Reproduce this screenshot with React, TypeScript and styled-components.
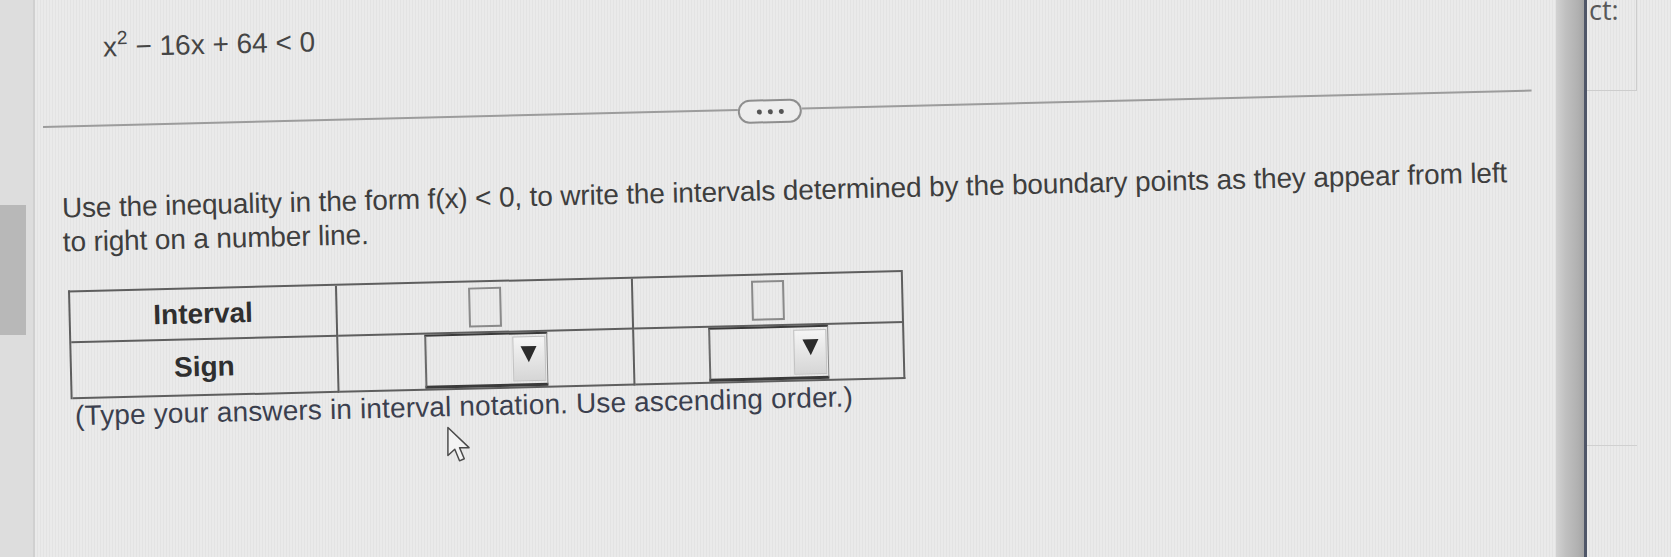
import React from "react";
import styled, { createGlobalStyle } from "styled-components";

const GlobalStyle = createGlobalStyle`
	html, body {
		margin: 0;
		padding: 0;
	}
	body {
		width: 1671px;
		height: 557px;
		overflow: hidden;
		background: #e8e8e8;
		font-family: "Liberation Sans", Arial, sans-serif;
	}
`;

const stripes = `repeating-linear-gradient(90deg, #eaeaea 0px, #eaeaea 2px, #e3e3e3 2px, #e3e3e3 3px)`;

export default function App() {
	return (
		<>
			<GlobalStyle />
			<Page>
				<LeftStrip>
					<SideTab />
				</LeftStrip>

				<Main>
					<Content>
						<Equation>
							x<Sup>2</Sup> − 16x + 64 &lt; 0
						</Equation>

						<Divider>
							<Rule $width={695} />
							<MoreButton>
								<Dot />
								<Dot />
								<Dot />
							</MoreButton>
							<Rule $width={730} />
						</Divider>

						<Prompt>
							Use the inequality in the form f(x) &lt; 0, to write the intervals determined by the
							boundary points as they appear from left to right on a number line.
						</Prompt>

						<Table>
							<Cell $w={267} $h={51}>
								<Label>Interval</Label>
							</Cell>
							<Cell $w={296} $h={51}>
								<AnswerBox />
							</Cell>
							<Cell $w={270} $h={51}>
								<AnswerBox />
							</Cell>

							<Cell $w={267} $h={56}>
								<Label>Sign</Label>
							</Cell>
							<Cell $w={296} $h={56}>
								<Select $w={123}>
									<SelectButton>
										<svg width="18" height="18" viewBox="0 0 18 18">
											<polygon points="1,1 17,1 9,17" fill="#2b2b2b" />
										</svg>
									</SelectButton>
								</Select>
							</Cell>
							<Cell $w={270} $h={56}>
								<Select $w={120}>
									<SelectButton>
										<svg width="18" height="18" viewBox="0 0 18 18">
											<polygon points="1,1 17,1 9,17" fill="#2b2b2b" />
										</svg>
									</SelectButton>
								</Select>
							</Cell>
						</Table>

						<Note>(Type your answers in interval notation. Use ascending order.)</Note>
					</Content>
				</Main>

				<Scrollbar />
				<ScrollEdge />

				<RightPanel>
					<HelpBox>
						<HelpText>ct:</HelpText>
					</HelpBox>
					<HelpRule />
				</RightPanel>

				<Cursor width="26" height="38" viewBox="0 0 24 36">
					<path
						d="M1.5 1.5 L1.5 28 L8 22 L12.5 33 L17 31 L12.5 20.5 L21.5 20.5 Z"
						fill="#f3f3f3"
						stroke="#4a4a4a"
						strokeWidth="1.4"
						strokeLinejoin="round"
					/>
				</Cursor>
			</Page>
		</>
	);
}

const Page = styled.div`
	position: relative;
	display: flex;
	width: 1671px;
	height: 557px;
	overflow: hidden;
`;

const LeftStrip = styled.div`
	box-sizing: border-box;
	width: 35px;
	flex-shrink: 0;
	display: flex;
	flex-direction: column;
	background: #dddddd;
	border-right: 2px solid #d0d0d0;
`;

const SideTab = styled.div`
	margin-top: 205px;
	width: 26px;
	height: 130px;
	background: #b8b8b8;
`;

const Main = styled.div`
	flex: 0 0 1521px;
	min-width: 0;
	overflow: hidden;
	background: ${stripes};
`;

const Content = styled.div`
	display: flex;
	flex-direction: column;
	align-items: flex-start;
	transform: rotate(-1.4deg);
	transform-origin: 8px 250px;
`;

const Equation = styled.div`
	padding: 33px 0 0 73px;
	font-size: 28px;
	line-height: 32px;
	color: #454545;
	white-space: pre;
`;

const Sup = styled.span`
	font-size: 19px;
	line-height: 0;
	vertical-align: 12px;
`;

const Divider = styled.div`
	display: flex;
	align-items: center;
	margin: 51px 0 0 11px;
	height: 22px;
`;

const Rule = styled.div<{ $width: number }>`
	width: ${(p) => p.$width}px;
	height: 2px;
	background: #9c9c9c;
`;

const MoreButton = styled.div`
	box-sizing: border-box;
	width: 64px;
	height: 24px;
	margin-top: 4px;
	display: flex;
	align-items: center;
	justify-content: center;
	gap: 6px;
	border: 2px solid #8e8e8e;
	border-radius: 12px;
	background: #ededed;
`;

const Dot = styled.span`
	width: 5px;
	height: 5px;
	border-radius: 50%;
	background: #555;
`;

const Prompt = styled.p`
	margin: 54px 0 0 28px;
	width: 1452px;
	font-size: 28px;
	line-height: 34px;
	letter-spacing: -0.15px;
	color: #3e3e3e;
`;

const Table = styled.div`
	display: grid;
	grid-template-columns: 267px 296px 270px;
	margin: 31px 0 0 32px;
	border-top: 2px solid #5e5e5e;
	border-left: 2px solid #5e5e5e;
`;

const Cell = styled.div<{ $w: number; $h: number }>`
	box-sizing: border-box;
	width: ${(p) => p.$w}px;
	height: ${(p) => p.$h}px;
	display: flex;
	align-items: center;
	justify-content: center;
	border-right: 2px solid #5e5e5e;
	border-bottom: 2px solid #5e5e5e;
`;

const Label = styled.span`
	font-size: 28px;
	font-weight: 700;
	color: #2f2f2f;
`;

const AnswerBox = styled.div`
	box-sizing: border-box;
	width: 33px;
	height: 40px;
	border: 2px solid #8a8a8a;
`;

const Select = styled.div<{ $w: number }>`
	box-sizing: border-box;
	width: ${(p) => p.$w}px;
	height: 100%;
	display: flex;
	justify-content: flex-end;
	align-items: center;
	padding-right: 1px;
	border-top: 2px solid #3a3a3a;
	border-bottom: 3px solid #3a3a3a;
	border-left: 2px solid #6a6a6a;
	border-right: 1px solid #8a8a8a;
`;

const SelectButton = styled.div`
	box-sizing: border-box;
	width: 33px;
	height: calc(100% - 4px);
	display: flex;
	justify-content: center;
	align-items: flex-start;
	padding-top: 8px;
	border: 1px solid #c2c2c2;
	background: linear-gradient(#f5f5f5, #d6d6d6);
`;

const Note = styled.p`
	margin: 0 0 0 36px;
	font-size: 28px;
	line-height: 34px;
	letter-spacing: 0.15px;
	color: #3b3f4e;
	white-space: nowrap;
`;

const Scrollbar = styled.div`
	width: 28px;
	flex-shrink: 0;
	background: linear-gradient(90deg, #d2d2d2, #c0c0c0 35%, #b0b0b0 80%, #a2a2a2);
`;

const ScrollEdge = styled.div`
	width: 3px;
	flex-shrink: 0;
	background: #4e5567;
`;

const RightPanel = styled.div`
	flex: 1;
	min-width: 0;
	display: flex;
	flex-direction: column;
	background: ${stripes};
`;

const HelpBox = styled.div`
	box-sizing: border-box;
	width: 50px;
	height: 91px;
	border-right: 1px solid #cdcdcd;
	border-bottom: 1px solid #cdcdcd;
	overflow: hidden;
`;

const HelpText = styled.div`
	margin-top: -5px;
	padding-left: 2px;
	font-family: "Open Sans", "Noto Sans", sans-serif;
	font-size: 27px;
	line-height: 30px;
	color: #585858;
`;

const HelpRule = styled.div`
	margin-top: 354px;
	width: 50px;
	border-top: 1px solid #d0d0d0;
`;

const Cursor = styled.svg`
	position: absolute;
	left: 446px;
	top: 426px;
`;
